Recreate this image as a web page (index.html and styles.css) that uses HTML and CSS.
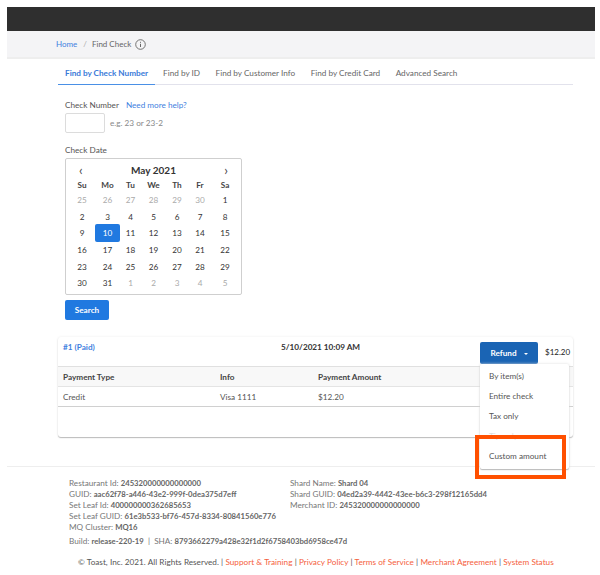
FILE: index.html
```html
<!DOCTYPE html>
<html lang="en">
<head>
<meta charset="utf-8">
<title>Find Check</title>
<link rel="stylesheet" href="styles.css">
</head>
<body>
<div class="shell">
  <div class="topbar"></div>
  <nav class="crumbs">
    <a class="link">Home</a><span class="sep">/</span><span>Find Check</span>
    <svg class="info" width="11" height="11" viewBox="0 0 11 11"><circle cx="5.5" cy="5.5" r="4.8" fill="none" stroke="#666" stroke-width="0.9"/><path d="M5.5 4.8v3.2M5.5 2.8v1" stroke="#666" stroke-width="1"/></svg>
  </nav>
  <main class="main">
    <div class="tabs">
      <a class="tab active">Find by Check Number</a>
      <a class="tab">Find by ID</a>
      <a class="tab">Find by Customer Info</a>
      <a class="tab">Find by Credit Card</a>
      <a class="tab">Advanced Search</a>
    </div>
    <form class="form">
      <div class="labelrow"><span>Check Number</span><a class="link">Need more help?</a></div>
      <div class="inputrow"><div class="input"></div><span class="hint">e.g. 23 or 23-2</span></div>
      <div class="datelabel">Check Date</div>
      <div class="calendar">
        <div class="calhead"><span class="arrow">&#8249;</span><strong>May 2021</strong><span class="arrow">&#8250;</span></div>
        <div class="days">
          <b>Su</b><b>Mo</b><b>Tu</b><b>We</b><b>Th</b><b>Fr</b><b>Sa</b>
          <i>25</i><i>26</i><i>27</i><i>28</i><i>29</i><i>30</i><span>1</span>
          <span>2</span><span>3</span><span>4</span><span>5</span><span>6</span><span>7</span><span>8</span>
          <span>9</span><span class="sel">10</span><span>11</span><span>12</span><span>13</span><span>14</span><span>15</span>
          <span>16</span><span>17</span><span>18</span><span>19</span><span>20</span><span>21</span><span>22</span>
          <span>23</span><span>24</span><span>25</span><span>26</span><span>27</span><span>28</span><span>29</span>
          <span>30</span><span>31</span><i>1</i><i>2</i><i>3</i><i>4</i><i>5</i>
        </div>
      </div>
      <div class="searchbtn">Search</div>
    </form>
    <section class="card">
      <div class="cardhead">
        <a class="link paid">#1 (Paid)</a>
        <strong class="when">5/10/2021 10:09 AM</strong>
        <div class="refund">Refund<span class="caret"></span></div>
        <strong class="total">$12.20</strong>
      </div>
      <div class="row thead"><span>Payment Type</span><span>Info</span><span>Payment Amount</span></div>
      <div class="row tbody"><span>Credit</span><span>Visa 1111</span><span>$12.20</span></div>
      <div class="cardfoot"></div>
      <ul class="menu">
        <li>By item(s)</li>
        <li>Entire check</li>
        <li>Tax only</li>
        <li class="faded">Tip only</li>
        <li>Custom amount</li>
      </ul>
      <div class="callout"></div>
    </section>
  </main>
  <footer class="footer">
    <div class="meta">
      <div>
        <p>Restaurant Id: <b>245320000000000000</b></p>
        <p>GUID: <b>aac62f78-a446-43e2-999f-0dea375d7eff</b></p>
        <p>Set Leaf Id: <b>400000000362685653</b></p>
        <p>Set Leaf GUID: <b>61e3b533-bf76-457d-8334-80841560e776</b></p>
        <p>MQ Cluster: <b>MQ16</b></p>
      </div>
      <div>
        <p>Shard Name: <b>Shard 04</b></p>
        <p>Shard GUID: <b>04ed2a39-4442-43ee-b6c3-298f12165dd4</b></p>
        <p>Merchant ID: <b>245320000000000000</b></p>
      </div>
    </div>
    <p class="build">Build: <b>release-220-19</b> &nbsp;| &nbsp;SHA: <b>8793662279a428e32f1d2f6758403bd6958ce47d</b></p>
    <p class="legal">© Toast, Inc. 2021. All Rights Reserved. | <a>Support &amp; Training</a> | <a>Privacy Policy</a> | <a>Terms of Service</a> | <a>Merchant Agreement</a> | <a>System Status</a></p>
  </footer>
</div>
</body>
</html>
```
FILE: styles.css
```css
* { box-sizing: border-box; }
html, body { margin: 0; padding: 0; background: #fff; }
body { font-family: Lato, "Liberation Sans", sans-serif; font-size: 8.2px; color: #555; overflow: hidden; }
p { margin: 0; }
.shell { width: 588px; margin: 7px 0 0 7px; }
.topbar { height: 24px; background: #2f2f2f; }
.crumbs { height: 28px; background: #f4f4f6; border-bottom: 2px solid #eeeeee; padding: 1px 0 1px 49px; display: flex; align-items: center; font-size: 8px; color: #666; }
.crumbs .sep { margin: 0 5px 0 6px; color: #aaa; }
.info { margin-left: 4px; }
.link { color: #3f7fe0; }
.main { padding: 0 22px 0 51px; height: 407px; }
.tabs { display: flex; height: 26px; border-bottom: 1px solid #e2e2ec; }
.tab { padding: 9px 0 0; margin-right: 15.5px; height: 26px; color: #666; white-space: nowrap; }
.tab.active { padding: 9px 7px 0; margin-right: 8px; color: #3a7ad8; font-weight: 700; border-bottom: 1px solid #4a90e6; }
.form { padding: 15px 0 0 7px; }
.labelrow { display: flex; gap: 7px; height: 11px; line-height: 11px; }
.inputrow { display: flex; align-items: center; gap: 5px; margin-top: 2px; }
.input { width: 40px; height: 20px; background: #fff; border: 1px solid #dcdcdc; border-radius: 2px; }
.hint { color: #888; }
.datelabel { margin-top: 11px; height: 12px; line-height: 12px; }
.calendar { width: 177px; height: 137px; margin-top: 2px; border: 1px solid #cfcfcf; border-radius: 2px; padding: 3px 3px 0; }
.calhead { display: flex; justify-content: space-between; align-items: center; height: 16px; padding: 0 10px; }
.calhead strong { font-size: 10px; color: #333; }
.arrow { font-size: 13px; color: #444; line-height: 16px; }
.days { display: grid; grid-template-columns: 26px 25px 21px 25px 22px 24px 26px; grid-template-rows: 14px; grid-auto-rows: 16.6px; text-align: center; align-items: center; color: #333; }
.days b { color: #444; }
.days i { font-style: normal; color: #aaa; }
.days .sel { background: #2079e0; color: #fff; border-radius: 2px; height: 18px; line-height: 18px; }
.searchbtn { width: 44px; height: 20px; margin-top: 5px; background: #2079e0; color: #fff; font-weight: 700; text-align: center; line-height: 20px; border-radius: 2px; }
.card { position: relative; height: 100px; margin-top: 17px; background: #fff; border-radius: 3px; box-shadow: 0 1px 1px #bbb, 0 0 3px #eee; }
.cardhead { height: 30px; position: relative; display: flex; align-items: flex-start; border-bottom: 1px solid #e0e0e0; padding: 5px 5px 0; }
.paid { font-weight: 700; }
.when { position: absolute; left: 223px; top: 5px; color: #333; }
.refund { position: absolute; left: 422px; top: 5px; width: 58px; height: 22px; background: #1a64b4; color: #fff; font-weight: 700; text-align: center; line-height: 22px; border-radius: 2px; }
.caret { display: inline-block; margin-left: 7px; vertical-align: 1px; border: 2.5px solid transparent; border-top-color: #fff; border-bottom: 0; }
.total { position: absolute; left: 487px; top: 10px; color: #222; font-weight: 400; font-size: 8px; }
.row { display: grid; grid-template-columns: 157px 98px 1fr; padding-left: 5px; height: 20px; align-items: center; border-bottom: 1px solid #e4e4e4; }
.thead { background: #f8f8f8; font-weight: 700; color: #444; }
.tbody { border-bottom-color: #d0d0d0; color: #555; }
.cardfoot { height: 29px; }
.menu { position: absolute; left: 422px; top: 27px; width: 89px; height: 105px; margin: 0; padding: 2px 0 0; list-style: none; background: #fff; border-radius: 2px; box-shadow: 0 1px 1px #bbb, 0 0 3px #ddd; z-index: 1; }
.menu li { height: 20px; line-height: 20px; padding-left: 9px; color: #555; }
.menu .faded { color: #ddd; }
.callout { position: absolute; left: 417px; top: 98px; width: 91px; height: 44px; border: 4px solid #ff5000; z-index: 2; }
.footer { border-top: 1px solid #eee; padding: 10.5px 0 0 62px; height: 110px; color: #777; font-size: 8.2px; }
.footer b { font-weight: 700; font-size: 7.7px; color: #666; }
.meta { display: grid; grid-template-columns: 221px 1fr; line-height: 11px; }
.build { margin-top: 2.5px; line-height: 12px; }
.legal { margin: 8.5px 0 0 9px; line-height: 12px; color: #555; white-space: nowrap; word-spacing: .15px; }
.legal a { color: #f5603c; }
```
